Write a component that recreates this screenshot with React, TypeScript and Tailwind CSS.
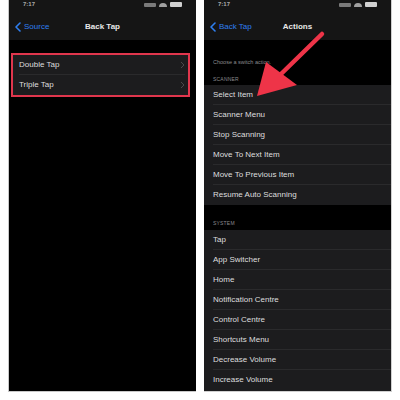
import React from "react";

const font = { fontFamily: '"Liberation Sans", Arial, sans-serif' };

const scanner = [
  "Select Item",
  "Scanner Menu",
  "Stop Scanning",
  "Move To Next Item",
  "Move To Previous Item",
  "Resume Auto Scanning",
];

const system = [
  "Tap",
  "App Switcher",
  "Home",
  "Notification Centre",
  "Control Centre",
  "Shortcuts Menu",
  "Decrease Volume",
  "Increase Volume",
];

const Chevron = ({ className }: { className?: string }) => (
  <svg width="5" height="8" viewBox="0 0 5 8" className={className}>
    <path d="M1 1l3 3-3 3" fill="none" stroke="currentColor" strokeWidth="1" />
  </svg>
);

const BackChevron = () => (
  <svg width="6" height="10" viewBox="0 0 6 10" className="text-[#2f7ff0]">
    <path d="M5 1L1 5l4 4" fill="none" stroke="currentColor" strokeWidth="1.6" strokeLinecap="round" strokeLinejoin="round" />
  </svg>
);

const StatusBar = () => (
  <div className="h-[8px] flex justify-between items-end px-[14px]">
    <span className="text-[6px] leading-[7px] font-bold text-[#a8a8a8]">7:17</span>
    <div className="flex items-end gap-[3px] mb-[1px]">
      <div className="w-[12px] h-[4px] bg-[#7a7a7a] rounded-[1px]" />
      <div className="w-[8px] h-[4px] bg-[#a0a0a0] rounded-t-full" />
      <div className="w-[12px] h-[5px] bg-[#d0d0d0] rounded-[1px]" />
    </div>
  </div>
);

const NavBar = ({ back, title }: { back: string; title: string }) => (
  <div className="bg-[#151515] h-[40px] flex flex-col">
    <StatusBar />
    <div className="relative flex-1 flex items-end pb-[8px] px-[6px]">
      <div className="flex items-center gap-[3px]">
        <BackChevron />
        <span className="text-[8px] leading-[10px] text-[#2f7ff0]">{back}</span>
      </div>
      <span className="absolute left-0 right-0 bottom-[8px] text-center text-[8px] leading-[10px] font-semibold text-[#e8e8e8]">
        {title}
      </span>
    </div>
  </div>
);

const Row = ({ label, last }: { label: string; last?: boolean }) => (
  <div className="h-[20px] bg-[#1c1c1e] flex items-center pl-[9px]">
    <div className={`h-full flex-1 flex items-center ${last ? "" : "border-b border-[#2a2a2c]"}`}>
      <span className="text-[8px] text-[#dedede]">{label}</span>
    </div>
  </div>
);

export default function App() {
  return (
    <div className="w-[400px] h-[400px] bg-white flex gap-[8px] px-[8px] pb-[8px]" style={font}>
      <div className="w-[188px] h-[392px] bg-black flex flex-col border-l border-b border-[#c8c8c8]">
        <NavBar back="Source" title="Back Tap" />
        <div className="h-[13px]" />
        <div className="ml-[2px] mr-[6px] border-2 border-[#e0364d]">
          {["Double Tap", "Triple Tap"].map((t, i) => (
            <div key={t} className="h-[20px] bg-[#1c1c1e] flex items-center pl-[6px] pr-[3px]">
              <div className={`h-full flex-1 flex items-center justify-between ${i === 0 ? "border-b border-[#2a2a2c]" : ""}`}>
                <span className="text-[8px] text-[#dedede]">{t}</span>
                <Chevron className="text-[#4a4a4c]" />
              </div>
            </div>
          ))}
        </div>
      </div>

      <div className="relative w-[188px] h-[392px] bg-black flex flex-col border-r border-b border-[#d0d0d0]">
        <NavBar back="Back Tap" title="Actions" />
        <div className="h-[45px] flex flex-col justify-end pl-[9px] pb-[2px] gap-[9px]">
          <span className="text-[5.5px] text-[#8a8a8e]">Choose a switch action.</span>
          <span className="text-[5px] text-[#8a8a8e] tracking-[0.2px]">SCANNER</span>
        </div>
        {scanner.map((s, i) => (
          <Row key={s} label={s} last={i === scanner.length - 1} />
        ))}
        <div className="h-[25px] flex items-end pl-[9px] pb-[3px]">
          <span className="text-[5px] text-[#8a8a8e] tracking-[0.2px]">SYSTEM</span>
        </div>
        {system.map((s, i) => (
          <Row key={s} label={s} last={i === system.length - 1} />
        ))}
        <div className="flex-1 bg-[#1c1c1e]" />

        <svg className="absolute left-0 top-0" width="188" height="120" viewBox="204 0 188 120">
          <line x1="322" y1="34" x2="280" y2="75" stroke="#ee3448" strokeWidth="4.5" strokeLinecap="round" />
          <polygon points="257,96 266,62 297,85" fill="#ee3448" />
        </svg>
      </div>
    </div>
  );
}
